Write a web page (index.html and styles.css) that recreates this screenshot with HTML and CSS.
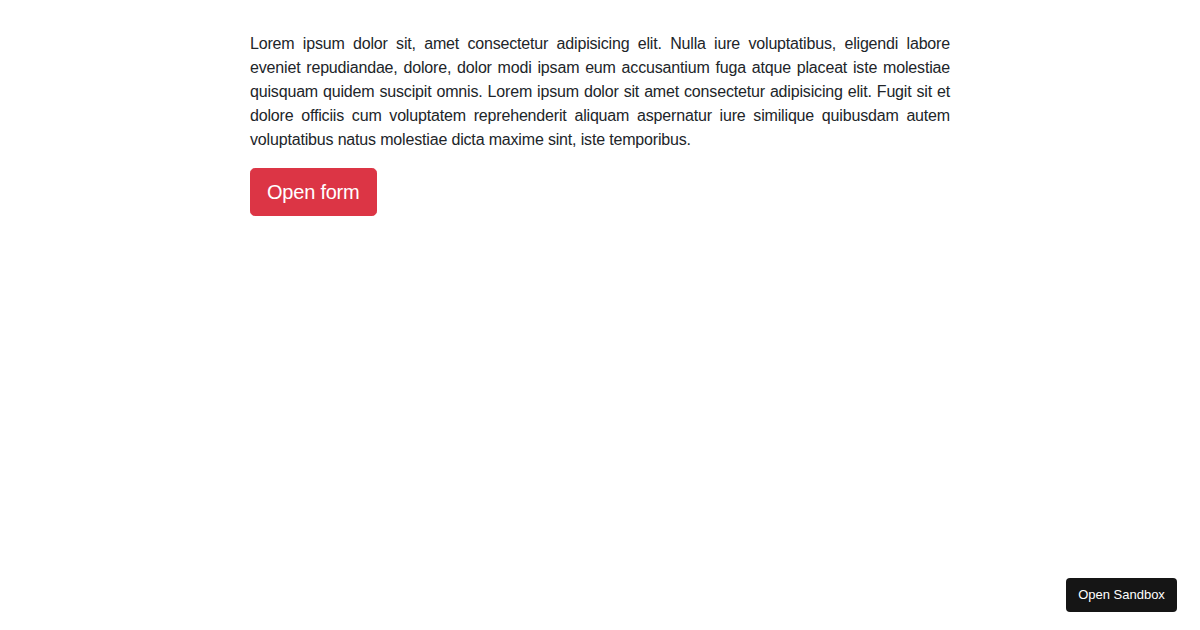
FILE: index.html
```html
<!DOCTYPE html>
<html lang="en">
<head>
<meta charset="utf-8">
<title>Open form</title>
<link rel="stylesheet" href="styles.css">
</head>
<body>
<main class="container">
  <p class="lead-text">Lorem ipsum dolor sit, amet consectetur adipisicing elit. Nulla iure voluptatibus, eligendi labore eveniet repudiandae, dolore, dolor modi ipsam eum accusantium fuga atque placeat iste molestiae quisquam quidem suscipit omnis. Lorem ipsum dolor sit amet consectetur adipisicing elit. Fugit sit et dolore officiis cum voluptatem reprehenderit aliquam aspernatur iure similique quibusdam autem voluptatibus natus molestiae dicta maxime sint, iste temporibus.</p>
  <button class="btn-danger" type="button">Open form</button>
</main>
<a class="sandbox-link" href="#">Open Sandbox</a>
</body>
</html>
```
FILE: styles.css
```css
html, body {
  margin: 0;
  padding: 0;
  background: #fff;
}
body {
  font-family: "Liberation Sans", Arial, sans-serif;
  font-size: 16px;
  line-height: 24px;
  color: #212529;
}
.container {
  width: 700px;
  margin: 0 auto;
  padding-top: 32px;
}
.lead-text {
  margin: 0 0 16px;
  text-align: justify;
  letter-spacing: -0.17px;
}
.btn-danger {
  display: inline-block;
  box-sizing: border-box;
  height: 48px;
  padding: 0 16px;
  font-family: inherit;
  font-size: 20px;
  line-height: 30px;
  letter-spacing: -0.22px;
  color: #fff;
  background: #dc3545;
  border: 1px solid #dc3545;
  border-radius: 4.8px;
  cursor: pointer;
}
.sandbox-link {
  position: fixed;
  right: 23px;
  bottom: 18px;
  box-sizing: border-box;
  width: 111px;
  height: 34px;
  display: flex;
  align-items: center;
  justify-content: center;
  background: #151515;
  color: #fff;
  font-size: 13px;
  text-decoration: none;
  border-radius: 4px;
}
```
